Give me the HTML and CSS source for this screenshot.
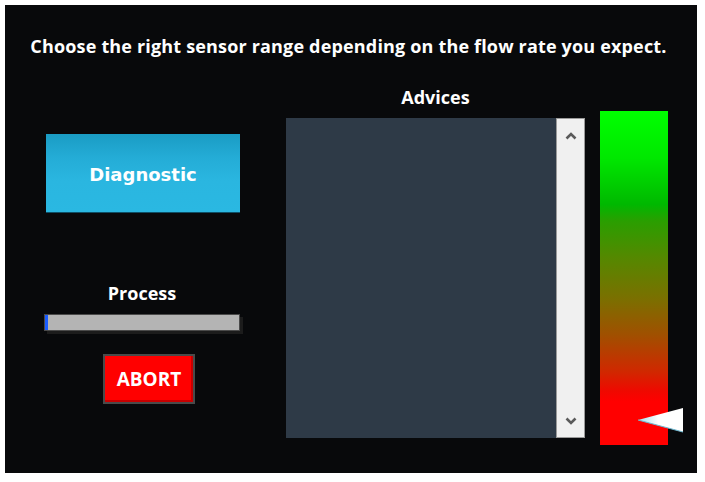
FILE: index.html
```html
<!DOCTYPE html>
<html>
<head>
<meta charset="utf-8">
<link rel="stylesheet" href="styles.css">
</head>
<body>
<div class="panel">
  <div class="title">Choose the right sensor range depending on the flow rate you expect.</div>
  <div class="main">
    <div class="left">
      <button class="diag">Diagnostic</button>
      <div class="label process-label">Process</div>
      <div class="progress"><div class="progress-fill"></div></div>
      <button class="abort">ABORT</button>
    </div>
    <div class="middle">
      <div class="label">Advices</div>
      <div class="advices">
        <div class="advices-text"></div>
        <div class="scrollbar">
          <svg class="chev" width="12" height="8" viewBox="0 0 12 8"><polyline points="1.5,6.5 6,2 10.5,6.5" fill="none" stroke="#5a5a5a" stroke-width="2.6"/></svg>
          <svg class="chev" width="12" height="8" viewBox="0 0 12 8"><polyline points="1.5,1.5 6,6 10.5,1.5" fill="none" stroke="#5a5a5a" stroke-width="2.6"/></svg>
        </div>
      </div>
    </div>
    <div class="right">
      <div class="gauge"></div>
      <svg class="pointer" width="46" height="26" viewBox="0 0 46 26">
        <defs>
          <linearGradient id="pg" x1="0" y1="0" x2="1" y2="0">
            <stop offset="0" stop-color="#9fe0f0"/>
            <stop offset="0.45" stop-color="#ffffff"/>
            <stop offset="1" stop-color="#ffffff"/>
          </linearGradient>
        </defs>
        <polygon points="0,13 45,1 45,25" fill="url(#pg)"/>
        <polyline points="0,13 45,25" fill="none" stroke="#6fb8d0" stroke-width="1.2"/>
      </svg>
    </div>
  </div>
</div>
</body>
</html>
```
FILE: styles.css
```css
* { box-sizing: border-box; }
html, body { margin: 0; padding: 0; background: #ffffff; }
body { font-family: "Open Sans", "DejaVu Sans", sans-serif; }

.panel {
  width: 692px;
  height: 468px;
  margin: 5px 0 0 5px;
  background: #08090b;
  color: #ffffff;
  position: relative;
  overflow: hidden;
  padding-top: 31px;
}

.title {
  font-weight: 700;
  font-size: 18px;
  line-height: 20px;
  text-align: center;
  padding-right: 5px;
  letter-spacing: 0.17px;
  white-space: nowrap;
}

.main {
  display: flex;
  margin-top: 31px;
  padding-left: 41px;
}

.label {
  font-weight: 700;
  font-size: 18px;
  line-height: 20px;
  text-align: center;
}

.left {
  width: 194px;
  display: flex;
  flex-direction: column;
}

.diag {
  margin-top: 47px;
  height: 79px;
  width: 194px;
  border: none;
  border-bottom: 1px solid #0f4f66;
  background: linear-gradient(#1a9cc4 0%, #24acd6 30%, #2ab6e0 60%, #2ab8e2 100%);
  color: #ffffff;
  font-family: "DejaVu Sans", "Open Sans", sans-serif;
  font-weight: 700;
  font-size: 18px;
  padding: 3px 0 0;
}

.process-label {
  margin-top: 70px;
  margin-left: -2px;
}

.progress {
  margin-top: 11px;
  height: 17px;
  width: 196px;
  margin-left: -2px;
  background: #b4b4b4;
  border: 1px solid #4a4a4a;
  box-shadow: 3px 3px 0 #1c1c1c;
  position: relative;
}

.progress-fill {
  width: 3px;
  height: 100%;
  background: #1a5cff;
}

.abort {
  margin-top: 23px;
  margin-left: 57px;
  width: 92px;
  height: 50px;
  background: #ff0000;
  border: 2px solid #4a4a4a;
  box-shadow: inset -2px -2px 0 #c80000;
  color: #ffffff;
  font-family: "Open Sans", "DejaVu Sans", sans-serif;
  font-weight: 700;
  font-size: 19px;
  padding: 0;
}

.middle {
  width: 299px;
  margin-left: 46px;
  display: flex;
  flex-direction: column;
}

.advices {
  margin-top: 11px;
  height: 320px;
  display: flex;
  background: #2e3a47;
}

.advices-text { flex: 1; }

.scrollbar {
  width: 29px;
  background: #f0f0f0;
  border: 1px solid #9a9a9a;
  display: flex;
  flex-direction: column;
  justify-content: space-between;
  align-items: center;
  padding: 13px 0 12px;
}

.chev { display: block; }

.right {
  margin-left: 15px;
  position: relative;
  width: 83px;
}

.gauge {
  margin-top: 24px;
  width: 68px;
  height: 334px;
  background: linear-gradient(
    #00ff00 0%,
    #00e800 14%,
    #00b800 28%,
    #2a9e00 33%,
    #558800 44%,
    #7a7000 56%,
    #a05000 67%,
    #d02800 78%,
    #f00800 84%,
    #ff0000 87%,
    #ff0000 100%);
}

.pointer {
  position: absolute;
  left: 38px;
  top: 320px;
}
```
